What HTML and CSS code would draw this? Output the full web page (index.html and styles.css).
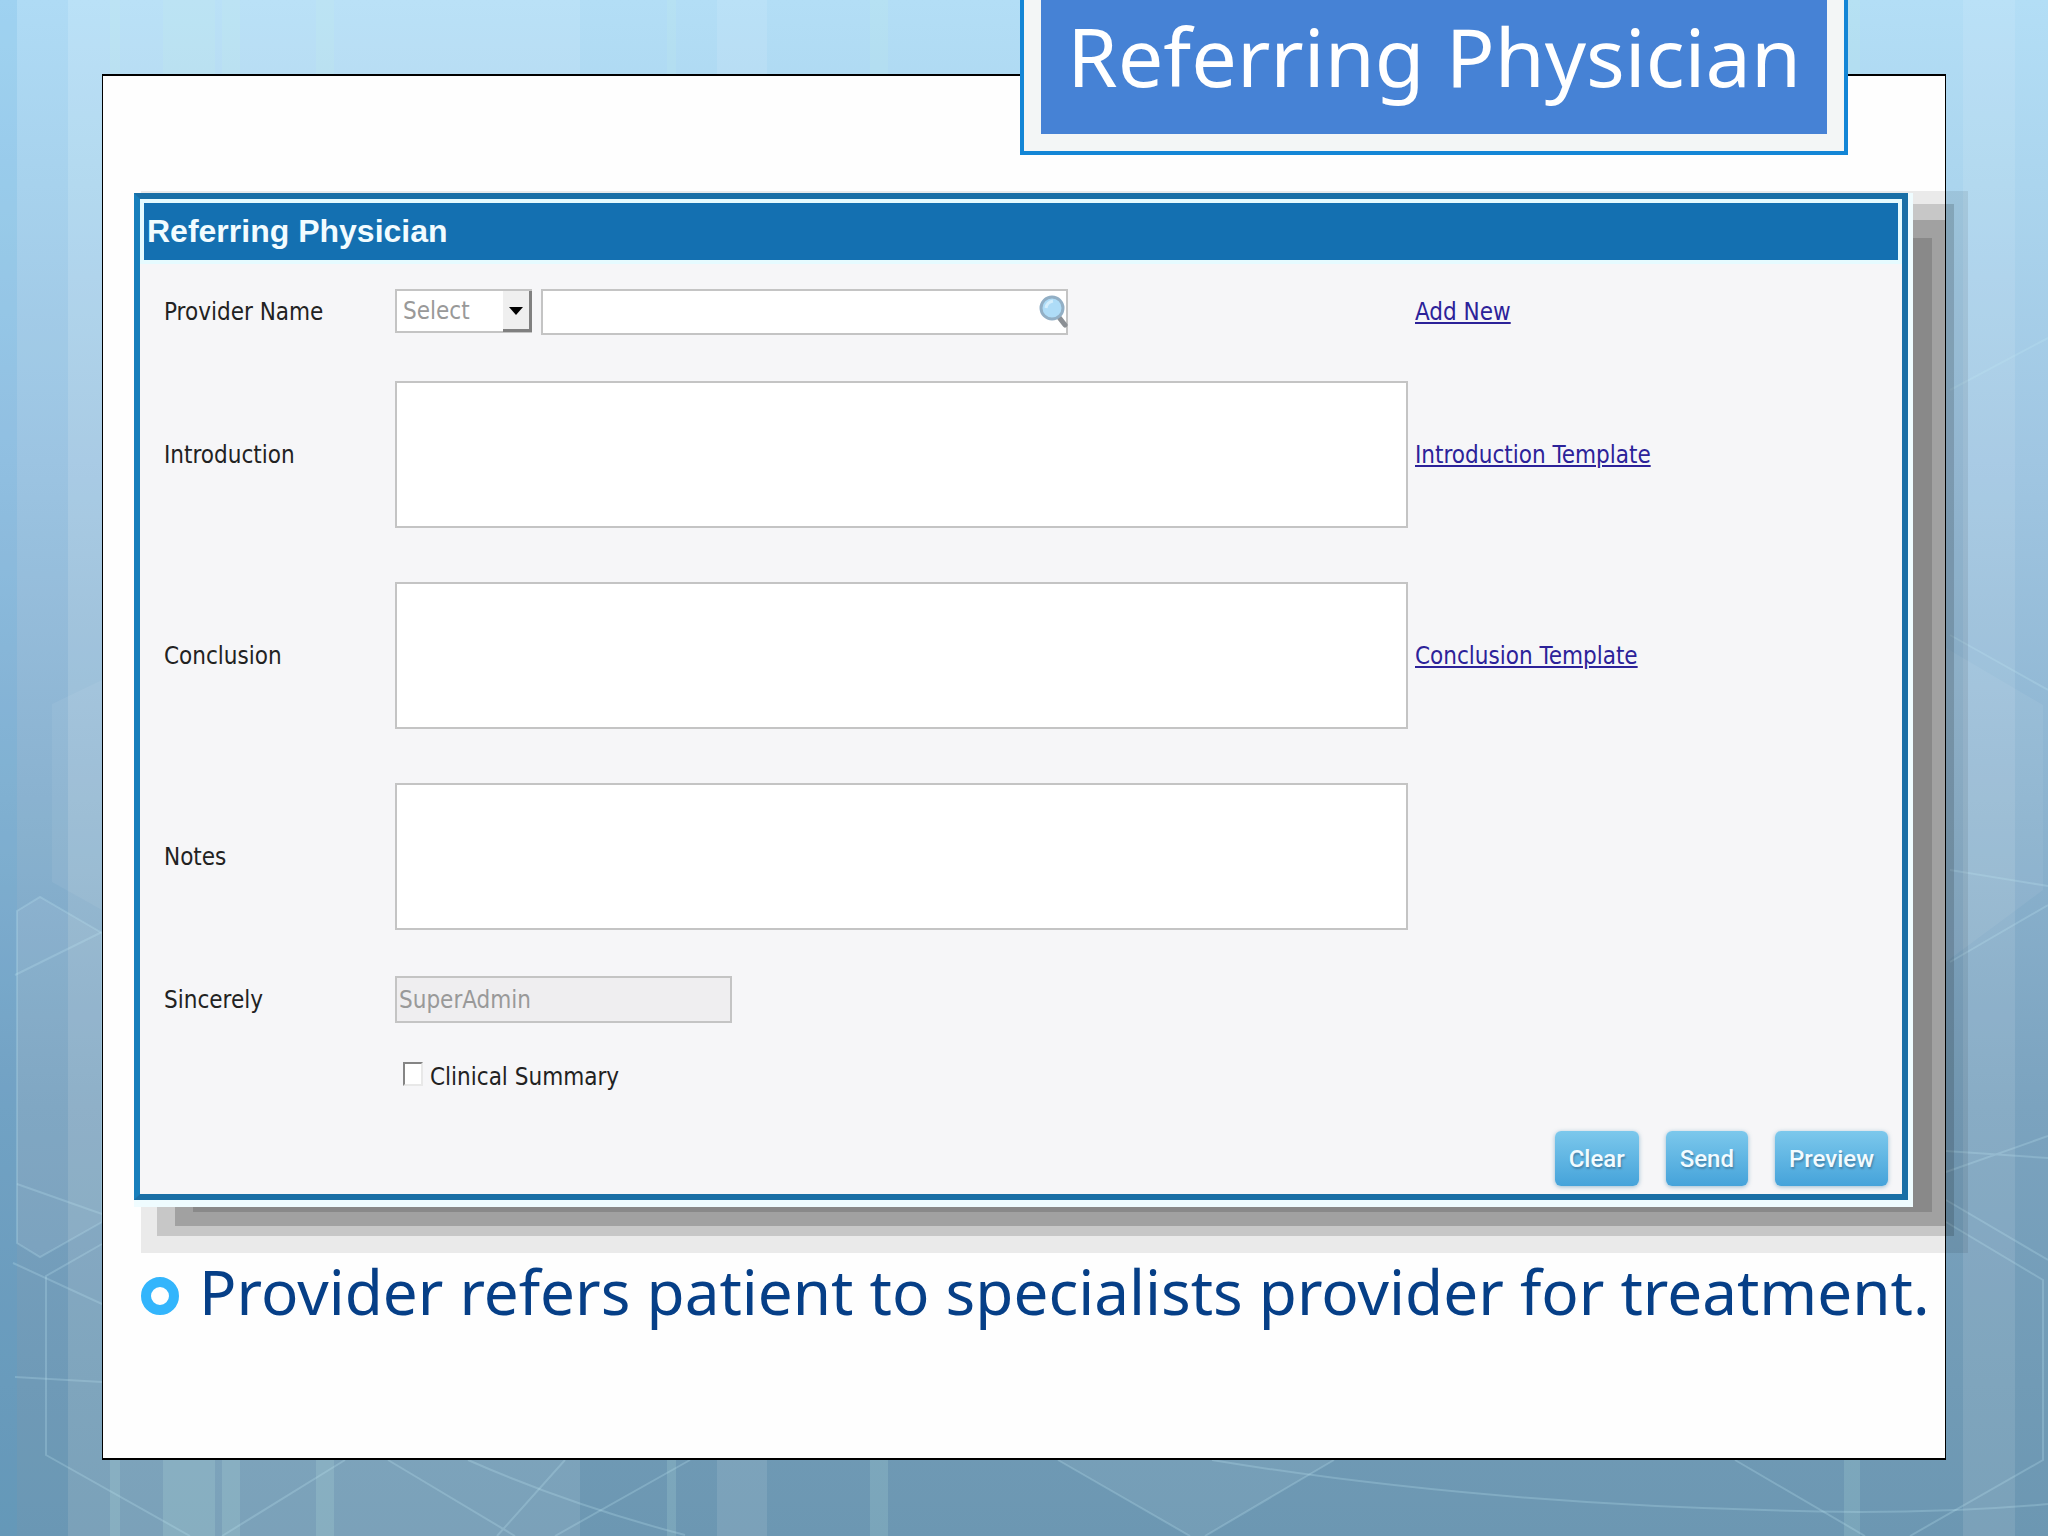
FILE: index.html
```
<!DOCTYPE html>
<html lang="en">
  <head>
    <meta charset="UTF-8" />
    <meta name="viewport" content="width=device-width, initial-scale=1.0" />
    <title>Referring Physician</title>
    <link rel="stylesheet" href="styles.css" />
  </head>
  <body>
    <!-- Stripes and hexagon lines behind the slide -->
    <svg class="backdrop" viewBox="0 0 2048 1536" preserveAspectRatio="none" aria-hidden="true">
      <g fill="#4aa3dc" fill-opacity="0.14">
        <rect x="0" y="0" width="17" height="1536" />
        <rect x="0" y="0" width="68" height="1536" fill-opacity="0.04" />
      </g>
      <g fill="#fff" fill-opacity="0.1">
        <rect x="68" y="0" width="512" height="1536" />
        <rect x="717" y="0" width="50" height="1536" />
        <rect x="1963" y="0" width="52" height="1536" />
      </g>
      <g fill="#c4f2e6" fill-opacity="0.16">
        <rect x="110" y="0" width="10" height="1536" />
        <rect x="163" y="0" width="52" height="1536" />
        <rect x="222" y="0" width="18" height="1536" />
        <rect x="316" y="0" width="18" height="1536" />
        <rect x="667" y="0" width="9" height="1536" />
        <rect x="870" y="0" width="18" height="1536" />
        <rect x="1844" y="0" width="16" height="1536" />
      </g>
      <g fill="#fff" fill-opacity="0.06">
        <path d="M17 911L40 897L102 933V1222L40 1257L17 1243Z" />
        <path d="M52 704L102 680V910L52 882Z" />
        <path d="M1058 1460L1190 1536H1205L1334 1460Z" />
        <path d="M1946 648L2043 705V890L1946 962Z" />
      </g>
      <g class="lines">
        <path d="M17 911L40 897L102 933V1222L40 1257L17 1243Z" />
        <path d="M15 975L102 932M17 1184L102 1214M13 1263L102 1304M15 1377L102 1382" />
        <path d="M102 1244L46 1276V1455L190 1536" />
        <path d="M222 1536L345 1460M388 1460L515 1536M565 1460L497 1536M555 1536L690 1460" />
        <path d="M468 1460Q570 1505 685 1535" />
        <path d="M1058 1460L1190 1536M1205 1536L1334 1460M1735 1460L1865 1536" />
        <path d="M1212 1460Q1500 1508 1860 1512Q1960 1512 2048 1504" />
        <path d="M1910 1536L2043 1460V1280L1946 1222M1946 1200L2048 1260" />
        <path d="M1946 1172L2048 1136M1946 1151L2048 1158" />
        <path d="M1950 390L2048 338M1950 635L2048 690M1950 870L2048 886M1950 962L2048 905" />
      </g>
    </svg>

    <main class="slide">
      <h1 class="slide-title">Referring Physician</h1>

      <section class="panel-frame">
        <form class="panel">
          <h2>Referring Physician</h2>

          <div class="fields">
            <div class="row">
              <label for="provider-name">Provider Name</label>
              <div class="provider">
                <span class="select-box">
                  <select aria-label="Provider type">
                    <option>Select</option>
                  </select>
                </span>
                <span class="search-box">
                  <input type="text" id="provider-name" />
                  <svg class="search-icon" viewBox="0 0 30 34" aria-hidden="true">
                    <path d="M20 22L27 31" stroke="#8b8f94" stroke-width="5" stroke-linecap="round" />
                    <circle cx="14" cy="14" r="11" fill="#aedcf7" stroke="#92afc5" stroke-width="3" />
                    <path d="M8 14Q9 8 15 7" fill="none" stroke="#d4eefc" stroke-width="3" />
                  </svg>
                </span>
              </div>
              <a href="#">Add New</a>
            </div>

            <div class="row">
              <label for="introduction">Introduction</label>
              <textarea id="introduction"></textarea>
              <a href="#">Introduction Template</a>
            </div>

            <div class="row spaced">
              <label for="conclusion">Conclusion</label>
              <textarea id="conclusion"></textarea>
              <a href="#">Conclusion Template</a>
            </div>

            <div class="row spaced">
              <label for="notes">Notes</label>
              <textarea id="notes"></textarea>
            </div>

            <div class="row">
              <label for="sincerely">Sincerely</label>
              <input type="text" id="sincerely" value="SuperAdmin" disabled />
            </div>

            <div class="summary">
              <input type="checkbox" id="summary" />
              <label for="summary">Clinical Summary</label>
            </div>
          </div>

          <div class="buttons">
            <button type="reset">Clear</button>
            <button type="button">Send</button>
            <button type="button">Preview</button>
          </div>
        </form>
      </section>

      <ul class="points">
        <li>Provider refers patient to specialists provider for treatment.</li>
      </ul>
    </main>
  </body>
</html>
```

FILE: styles.css
```
*,
*::before,
*::after {
  margin: 0;
  padding: 0;
  box-sizing: border-box;
}
body {
  position: relative;
  min-height: 100vh;
  padding: 74px 102px 76px;
  background: linear-gradient(
    #b3def6 0%,
    #abd5ee 12%,
    #a0c6e2 30%,
    #8db4d0 52%,
    #7ba3bf 72%,
    #719bb6 90%,
    #6c97b2 100%
  );
  font-family: "DejaVu Sans Condensed", "DejaVu Sans", sans-serif;
  font-size: 24px;
  color: #222;
}
.backdrop {
  position: absolute;
  top: 0;
  left: 0;
  width: 100%;
  height: 100%;
}
.lines {
  fill: none;
  stroke: #bfe6f2;
  stroke-opacity: 0.25;
  stroke-width: 2;
}
.slide {
  position: relative;
  min-height: calc(100vh - 150px);
  padding-top: 117px;
  background: #fefefe;
  border: 2px solid #000;
  border-left-width: 1px;
  border-right-width: 1px;
}
.slide-title {
  position: absolute;
  top: -76px;
  right: 101px;
  padding: 0 26px 22px;
  font-family: "Noto Sans", sans-serif;
  font-size: 81px;
  font-weight: 400;
  line-height: 112px;
  white-space: nowrap;
  color: #fff;
  background: #4682d5;
  border: 17px solid #f3f6f6;
  border-top: 0;
  outline: 4px solid #1386d6;
}

/* Window with the stepped shadow */
.panel-frame {
  margin: 0 32px 0 31px;
  padding: 0 5px 7px 0;
  background: #effcff;
  box-shadow:
    39px 25px 0 -20px rgba(0, 0, 0, 0.15),
    37px 23px 0 -4px rgba(0, 0, 0, 0.19),
    32px 20px 0 9px rgba(0, 0, 0, 0.15),
    31px 22px 0 24px rgba(0, 0, 0, 0.08);
}
.panel {
  padding: 4px 4px 8px;
  background: #f6f6f8;
  border: 6px solid #1a6fa6;
  border-left-color: #187fbc;
}
h2 {
  padding-left: 3px;
  font-family: "Liberation Sans", Arial, sans-serif;
  font-size: 32px;
  line-height: 57px;
  color: #f2fcff;
  background: #1470b1;
  box-shadow: 0 0 0 4px #e6fbff;
}
.fields {
  padding: 29px 0 0 20px;
}
.row {
  display: grid;
  grid-template-columns: 231px minmax(0, 1013px) 1fr;
  align-items: center;
  margin-bottom: 46px;
}
.row:has(+ .spaced) {
  margin-bottom: 54px;
}
.row a {
  margin-left: 7px;
  color: #2c2299;
}
.provider {
  display: flex;
  align-items: flex-start;
  gap: 9px;
}
input,
select,
textarea {
  font: inherit;
  color: #999;
  background: #fff;
  border: 2px solid #c4c4c4;
  border-radius: 0;
}
textarea {
  display: block;
  width: 100%;
  height: 147px;
  resize: none;
}
.select-box {
  position: relative;
}
.select-box select {
  display: block;
  width: 137px;
  height: 44px;
  padding-left: 6px;
  appearance: none;
}
.select-box::before {
  content: "";
  position: absolute;
  top: 2px;
  right: 0;
  width: 29px;
  height: 41px;
  background: #efefef;
  border-right: 3px solid #808080;
  border-bottom: 3px solid #808080;
  pointer-events: none;
}
.select-box::after {
  content: "";
  position: absolute;
  top: 18px;
  right: 9px;
  border: 7px solid transparent;
  border-top: 8px solid #000;
  border-bottom: 0;
  pointer-events: none;
}
.search-box {
  position: relative;
  width: 527px;
}
.search-box input {
  display: block;
  width: 100%;
  height: 46px;
  padding: 0 34px 0 6px;
}
.search-icon {
  position: absolute;
  top: 5px;
  right: 0;
  width: 30px;
  height: 34px;
}
#sincerely {
  width: 337px;
  height: 47px;
  padding-left: 2px;
  background: #efeef0;
}
.summary {
  display: flex;
  align-items: center;
  gap: 7px;
  margin: -12px 0 34px 239px;
  line-height: 40px;
}
.summary input {
  width: 20px;
  height: 24px;
  margin-bottom: 6px;
  appearance: none;
  border-color: #858585 #e8e8e8 #e8e8e8 #858585;
}
.buttons {
  display: flex;
  justify-content: flex-end;
  gap: 27px;
  padding-right: 10px;
}
button {
  height: 55px;
  padding: 0 14px;
  font-family: Roboto, sans-serif;
  font-size: 24px;
  font-weight: 500;
  color: #f2fbff;
  text-shadow: 1px 2px 2px #4682a8;
  background: linear-gradient(#7cc8ec, #45a3da);
  border: 0;
  border-radius: 6px;
  box-shadow: 0 1px 4px rgba(60, 130, 170, 0.5);
  cursor: pointer;
}
.points {
  margin: 42px 0 0 38px;
  list-style: none;
}
.points li {
  display: flex;
  align-items: center;
  gap: 20px;
  font-family: "Noto Sans", sans-serif;
  font-size: 62px;
  line-height: 84px;
  color: #063f87;
}
.points li::before {
  content: "";
  flex: none;
  width: 38px;
  height: 38px;
  margin-top: 10px;
  border: 10px solid #33b5fc;
  border-radius: 50%;
}
```
